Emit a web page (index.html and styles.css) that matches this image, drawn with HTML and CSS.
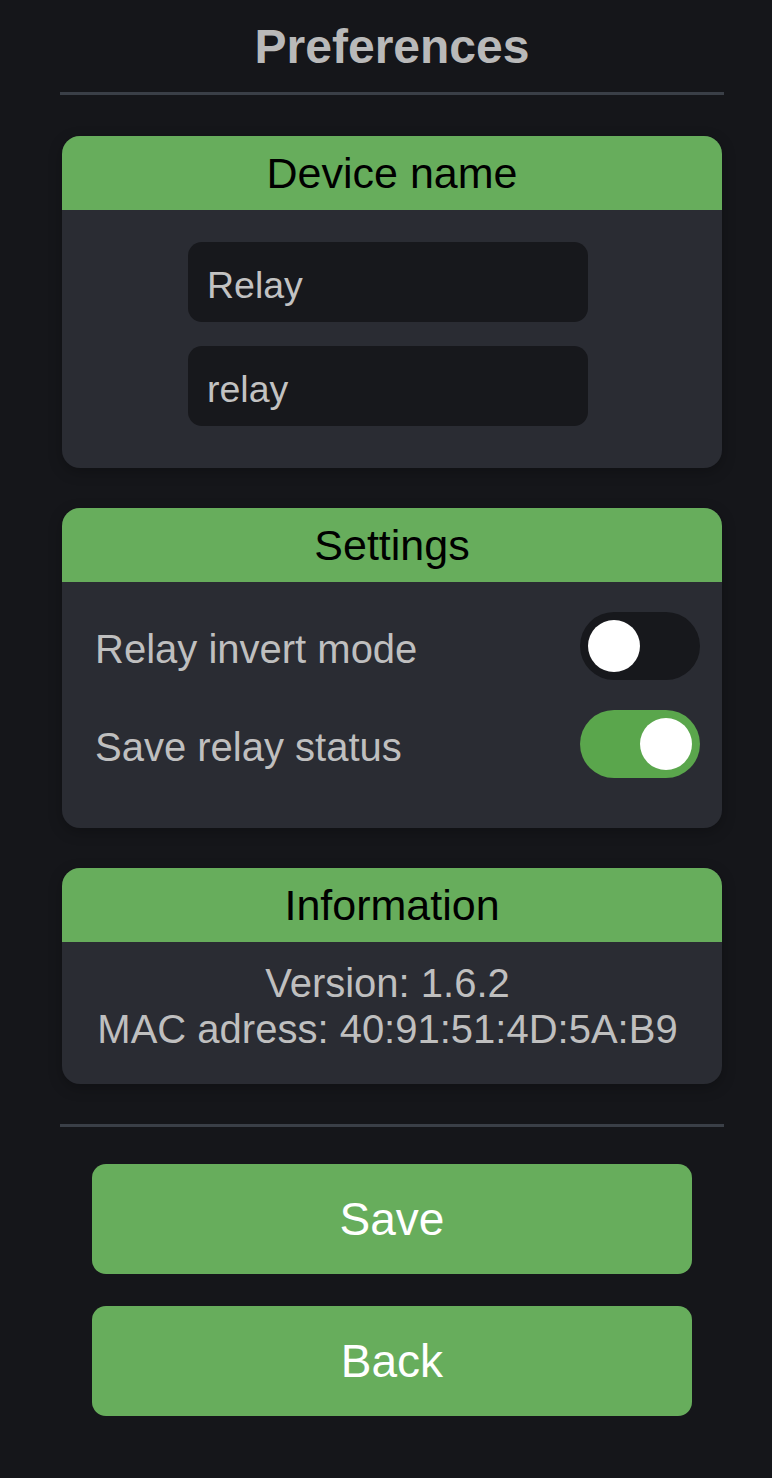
FILE: index.html
```html
<!DOCTYPE html>
<html lang="en">
<head>
<meta charset="utf-8">
<title>Preferences</title>
<link rel="stylesheet" href="styles.css">
</head>
<body>
<main class="page">
  <h1 class="title">Preferences</h1>
  <hr class="divider divider-top">

  <section class="card card-name">
    <h2 class="card-head">Device name</h2>
    <div class="card-body name-body">
      <input class="field" type="text" value="Relay">
      <input class="field" type="text" value="relay">
    </div>
  </section>

  <section class="card card-settings">
    <h2 class="card-head">Settings</h2>
    <div class="card-body settings-body">
      <div class="row">
        <span class="label">Relay invert mode</span>
        <span class="toggle"><span class="knob"></span></span>
      </div>
      <div class="row">
        <span class="label">Save relay status</span>
        <span class="toggle on"><span class="knob"></span></span>
      </div>
    </div>
  </section>

  <section class="card card-info">
    <h2 class="card-head">Information</h2>
    <div class="card-body info-body">
      <div class="info-line">Version: 1.6.2</div>
      <div class="info-line">MAC adress: 40:91:51:4D:5A:B9</div>
    </div>
  </section>

  <hr class="divider divider-bottom">

  <div class="actions">
    <button class="btn" type="button">Save</button>
    <button class="btn" type="button">Back</button>
  </div>
</main>
</body>
</html>
```

FILE: styles.css
```css
html, body {
  margin: 0;
  padding: 0;
  background: #15161a;
}

body {
  font-family: "Liberation Sans", Arial, Helvetica, sans-serif;
  color: #bfbfbf;
}

.page {
  width: 664px;
  margin-left: 60px;
  padding-top: 20px;
  padding-bottom: 62px;
  display: flex;
  flex-direction: column;
}

.title {
  margin: 0;
  font-size: 48px;
  line-height: 54px;
  font-weight: 700;
  color: #b9b9b9;
  text-align: center;
}

.divider {
  border: 0;
  height: 3px;
  background: #3a3f47;
  margin: 0;
  width: 664px;
}

.divider-top {
  margin-top: 18px;
  margin-bottom: 41px;
}

.card {
  margin: 0 2px 40px;
  background: #2a2c33;
  border-radius: 18px;
  overflow: hidden;
  box-shadow: 0 4px 14px rgba(0, 0, 0, 0.25);
}

.card-head {
  margin: 0;
  height: 74px;
  line-height: 74px;
  background: #67ad5c;
  color: #000;
  font-size: 43px;
  font-weight: 400;
  text-align: center;
}

.name-body {
  padding: 32px 0 42px 126px;
  display: flex;
  flex-direction: column;
  gap: 24px;
}

.field {
  box-sizing: border-box;
  width: 400px;
  height: 80px;
  padding: 6px 20px 0 19px;
  border: 0;
  border-radius: 14px;
  background: #17181c;
  color: #c2c2c2;
  font-family: "Liberation Sans", Arial, Helvetica, sans-serif;
  font-size: 37.5px;
  outline: none;
}

.settings-body {
  padding: 30px 22px 50px 33px;
  display: flex;
  flex-direction: column;
  gap: 30px;
}

.row {
  display: flex;
  align-items: center;
  justify-content: space-between;
}

.label {
  font-size: 40px;
  padding-top: 6px;
  color: #bfbfbf;
}

.toggle {
  box-sizing: border-box;
  width: 120px;
  height: 68px;
  border-radius: 34px;
  background: #17181c;
  padding: 8px;
  display: flex;
  justify-content: flex-start;
}

.toggle.on {
  background: #5aa64c;
  justify-content: flex-end;
}

.knob {
  width: 52px;
  height: 52px;
  border-radius: 50%;
  background: #fff;
}

.info-body {
  padding: 18px 9px 32px 0;
  text-align: center;
}

.info-line {
  font-size: 40px;
  line-height: 46px;
  color: #bfbfbf;
}

.card-info {
  margin-bottom: 40px;
}

.divider-bottom {
  margin-top: 0;
  margin-bottom: 37px;
}

.actions {
  display: flex;
  flex-direction: column;
  align-items: center;
  gap: 32px;
}

.btn {
  width: 600px;
  height: 110px;
  border: 0;
  border-radius: 14px;
  background: #67ad5c;
  color: #fff;
  font-family: "Liberation Sans", Arial, Helvetica, sans-serif;
  font-size: 46px;
  padding: 0;
  cursor: pointer;
}
```
